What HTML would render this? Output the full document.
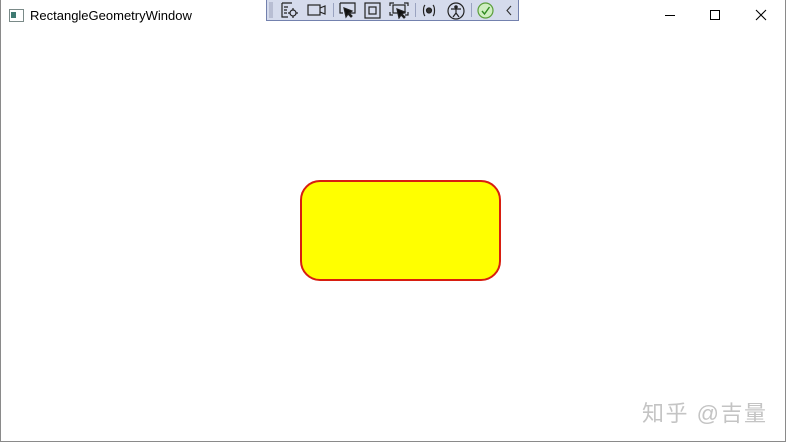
<!DOCTYPE html>
<html><head><meta charset="utf-8"><style>
html,body{margin:0;padding:0;}
body{width:786px;height:443px;position:relative;overflow:hidden;background:#fff;font-family:"Liberation Sans","Noto Sans CJK SC",sans-serif;}
.frame{position:absolute;left:0;top:0;width:784px;height:441px;border:1px solid #8a8a8a;border-top:none;}
.title{position:absolute;left:30px;top:8px;font-size:13px;color:#000;}
.appicon{position:absolute;left:9px;top:9px;width:13px;height:11px;border:1px solid #7a8a88;background:#fff;}
.appicon:before{content:"";position:absolute;left:1px;top:2px;width:5px;height:6px;background:#3f7a72;}
.tb{position:absolute;left:266px;top:0;width:251px;height:20px;background:#d5dbec;border:1px solid #7381ae;border-top:none;}
.grip{position:absolute;left:2px;top:2px;width:4px;height:16px;background-image:radial-gradient(#6a7090 0.6px,transparent 0.8px);background-size:2px 2px;}
.sep{position:absolute;top:3px;width:1px;height:14px;background:#9aa3c0;}
.rect{position:absolute;left:300px;top:180px;width:197px;height:97px;background:#ffff00;border:2px solid #d81e10;border-radius:20px;}
.wm{position:absolute;left:642px;top:396px;font-size:22px;color:#c4c4c4;letter-spacing:1.5px;}
svg{position:absolute;}
</style></head><body>
<div class="frame"></div>
<div class="appicon"></div>
<div class="title">RectangleGeometryWindow</div>
<div class="tb">
 <div class="grip"></div>
 <svg style="left:14px;top:2px" width="18" height="17" viewBox="0 0 18 17" fill="none" stroke="#222" stroke-width="1.2"><path d="M1 1h10M1 1v14h6M3 5h4M3 8h3M3 11h3"/><circle cx="12" cy="11" r="3"/><path d="M12 6v2M12 14v2M7 11h2M15 11h2"/></svg>
 <svg style="left:40px;top:4px" width="20" height="13" viewBox="0 0 20 13" fill="none" stroke="#222" stroke-width="1.2"><rect x="1" y="1" width="12" height="10"/><path d="M13 4l5-2v8l-5-2"/></svg>
 <div class="sep" style="left:66px"></div>
 <svg style="left:72px;top:2px" width="18" height="17" viewBox="0 0 18 17" fill="none" stroke="#222" stroke-width="1.2"><path d="M1 1h15v10h-5M1 1v10h3"/><path d="M5 6l2 9 2-3 3 3 1-1-3-3 3-2z" fill="#111"/></svg>
 <svg style="left:97px;top:2px" width="17" height="17" viewBox="0 0 17 17" fill="none" stroke="#222" stroke-width="1.2"><rect x="1" y="1" width="15" height="15"/><rect x="5" y="5" width="7" height="7"/></svg>
 <svg style="left:122px;top:2px" width="20" height="17" viewBox="0 0 20 17" fill="none" stroke="#222" stroke-width="1.2"><path d="M1 4V1h4M15 1h4v3M1 10v3h3M19 10v3h-3"/><rect x="4" y="3" width="12" height="8"/><path d="M8 7l2 9 2-3 3 3 1-1-3-3 3-2z" fill="#111"/></svg>
 <div class="sep" style="left:148px"></div>
 <svg style="left:155px;top:4px" width="14" height="13" viewBox="0 0 14 13" fill="none" stroke="#222" stroke-width="1.2"><path d="M3 1C1 3 1 10 3 12M11 1c2 2 2 9 0 11"/><circle cx="7" cy="6.5" r="2.5" fill="#333"/></svg>
 <svg style="left:180px;top:2px" width="18" height="18" viewBox="0 0 18 18" fill="none" stroke="#222" stroke-width="1.2"><circle cx="9" cy="9" r="8"/><circle cx="9" cy="5" r="1.2" fill="#222"/><path d="M4 7h10M9 7v4l-3 4M9 11l3 4"/></svg>
 <div class="sep" style="left:204px"></div>
 <svg style="left:210px;top:2px" width="17" height="17" viewBox="0 0 17 17"><circle cx="8.5" cy="8.5" r="7.5" fill="#cfeec0" stroke="#5a9e3a" stroke-width="1.2"/><path d="M5 9l2.5 3 5-7" fill="none" stroke="#2e8a20" stroke-width="1.4"/></svg>
 <svg style="left:238px;top:5px" width="8" height="11" viewBox="0 0 8 11" fill="none" stroke="#333" stroke-width="1.1"><path d="M6 1L2 5.5 6 10"/></svg>
</div>
<svg style="left:664px;top:9px" width="12" height="12" viewBox="0 0 12 12"><path d="M1 6.5h10" stroke="#000" stroke-width="1"/></svg>
<svg style="left:709px;top:9px" width="12" height="12" viewBox="0 0 12 12"><rect x="1.5" y="1.5" width="9" height="9" fill="none" stroke="#000"/></svg>
<svg style="left:755px;top:9px" width="12" height="12" viewBox="0 0 12 12"><path d="M1 1l10 10M11 1L1 11" stroke="#000" stroke-width="1.1"/></svg>
<div class="rect"></div>
<div class="wm">知乎 @吉量</div>
</body></html>
